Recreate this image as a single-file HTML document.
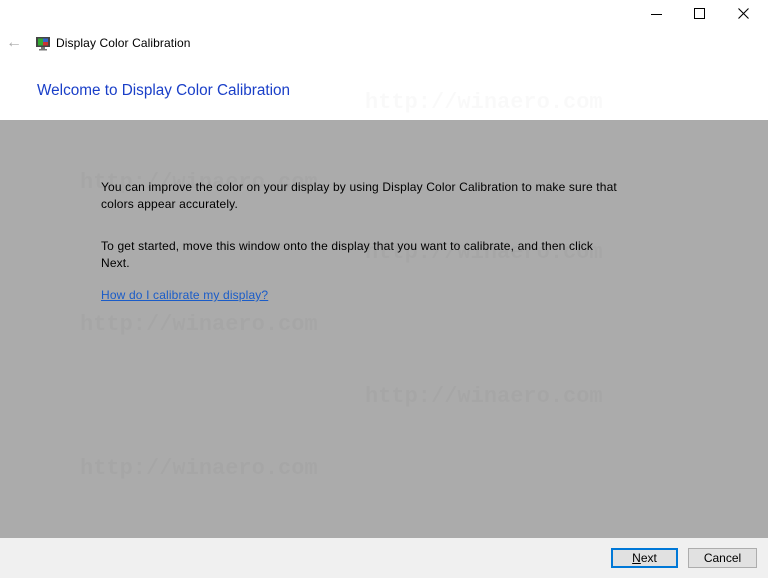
<!DOCTYPE html>
<html><head><style>
body{margin:0;width:768px;height:578px;position:relative;overflow:hidden;background:#fff;font-family:"Segoe UI","Liberation Sans",sans-serif;}
.t{position:absolute;white-space:nowrap}
.wm{position:absolute;font-family:"Liberation Mono",monospace;font-size:22px;font-weight:bold;color:rgba(0,0,0,0.025)}
</style></head><body>
<div class="t" style="left:6px;top:34px;font-size:16px;color:#aaa">&#8592;</div>
<svg style="position:absolute;left:35px;top:36px" width="16" height="15"><rect x="1" y="1" width="14" height="10" fill="#444"/><rect x="3" y="2.5" width="10" height="7" fill="#c33"/><rect x="3" y="2.5" width="5" height="7" fill="#3a3"/><rect x="8" y="2.5" width="5" height="3.5" fill="#36c"/><rect x="6" y="11" width="4" height="2" fill="#777"/><rect x="4" y="13" width="8" height="1.5" fill="#777"/></svg>
<div class="t" style="left:56px;top:36px;font-size:12px;color:#000;letter-spacing:0.1px">Display Color Calibration</div>
<div style="position:absolute;left:651px;top:14px;width:11px;height:1px;background:#000"></div>
<div style="position:absolute;left:694px;top:8px;width:9px;height:9px;border:1px solid #000"></div>
<svg style="position:absolute;left:738px;top:8px" width="11" height="11"><path d="M0.5 0.5L10.5 10.5M10.5 0.5L0.5 10.5" stroke="#000" stroke-width="1.1"/></svg>
<div class="t" style="left:37px;top:82px;font-size:15.3px;color:#1a3fc8">Welcome to Display Color Calibration</div>
<div style="position:absolute;left:0;top:120px;width:768px;height:418px;background:#ababab"></div>
<div class="t" style="left:101px;top:179px;font-size:12px;line-height:17px;color:#000;letter-spacing:0.15px">You can improve the color on your display by using Display Color Calibration to make sure that<br>colors appear accurately.</div>
<div class="t" style="left:101px;top:238px;font-size:12px;line-height:17px;color:#000;letter-spacing:0.15px">To get started, move this window onto the display that you want to calibrate, and then click<br>Next.</div>
<div class="t" style="left:101px;top:288px;font-size:12px;color:#1a5cc8;text-decoration:underline;letter-spacing:0.15px">How do I calibrate my display?</div>
<div class="wm" style="left:365px;top:90px">http://winaero.com</div>
<div class="wm" style="left:80px;top:170px">http://winaero.com</div>
<div class="wm" style="left:365px;top:240px">http://winaero.com</div>
<div class="wm" style="left:80px;top:312px">http://winaero.com</div>
<div class="wm" style="left:365px;top:384px">http://winaero.com</div>
<div class="wm" style="left:80px;top:456px">http://winaero.com</div>
<div style="position:absolute;left:0;top:538px;width:768px;height:40px;background:#f0f0f0"></div>
<div style="position:absolute;left:611px;top:548px;width:65px;height:18px;border:1px solid #0078d7;box-shadow:inset 0 0 0 1px #0078d7;background:#e1e1e1;font-size:12px;text-align:center;line-height:18px"><u>N</u>ext</div>
<div style="position:absolute;left:688px;top:548px;width:67px;height:18px;border:1px solid #adadad;background:#e1e1e1;font-size:12px;text-align:center;line-height:18px">Cancel</div>
</body></html>
